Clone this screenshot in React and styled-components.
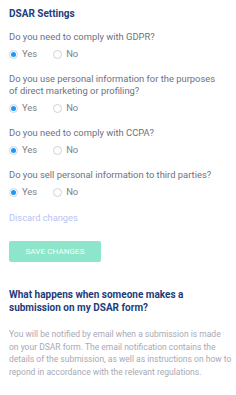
import React from "react";
import styled, { createGlobalStyle } from "styled-components";

const Global = createGlobalStyle`
  html, body { margin: 0; padding: 0; background: #ffffff; }
  body { font-family: Roboto, "Noto Sans", Arial, sans-serif; -webkit-font-smoothing: antialiased; }
  * { box-sizing: border-box; }
`;

const Page = styled.div`
  width: 236px;
  padding: 7px 4px 20px 9px;
  display: flex;
  flex-direction: column;
`;

const Title = styled.h2`
  margin: 0;
  font-size: 10px;
  line-height: 14px;
  font-weight: 700;
  color: #1d3d7c;
`;

const Questions = styled.div`
  display: flex;
  flex-direction: column;
  gap: 13px;
  margin-top: 10px;
`;

const Question = styled.div`
  display: flex;
  flex-direction: column;
  gap: 5px;
`;

const QText = styled.div`
  font-size: 9.4px;
  line-height: 12px;
  color: #6e7181;
  padding-right: 12px;
`;

const RadioRow = styled.div`
  display: flex;
  align-items: center;
  gap: 16px;
  height: 12px;
`;

const Option = styled.label`
  display: flex;
  align-items: center;
  gap: 4px;
  font-size: 9.4px;
  line-height: 12px;
  color: #7b7e8c;
`;

const Circle = styled.span`
  width: 9px;
  height: 9px;
  border-radius: 50%;
  border: 1px solid ${(p) => (p.$on ? "#c9d6e6" : "#cfd2d8")};
  background: #fff;
  display: flex;
  align-items: center;
  justify-content: center;
  &::after {
    content: "";
    width: 5px;
    height: 5px;
    border-radius: 50%;
    background: ${(p) => (p.$on ? "#2196f3" : "transparent")};
  }
`;

const Discard = styled.div`
  margin-top: 14px;
  font-size: 9.3px;
  line-height: 12px;
  color: #b7c3f3;
`;

const SaveButton = styled.button`
  margin-top: 17px;
  width: 92px;
  height: 21px;
  border: none;
  border-radius: 2px;
  background: #8de6cb;
  color: #f4fffb;
  font-family: inherit;
  font-size: 8px;
  letter-spacing: 0.1px;
  text-transform: uppercase;
  padding: 0;
`;

const Heading = styled.h3`
  margin: 26px 0 0 0;
  font-size: 10px;
  line-height: 13px;
  font-weight: 700;
  color: #1d3d7c;
  padding-right: 36px;
`;

const Para = styled.p`
  margin: 14px 0 0 0;
  font-size: 8.5px;
  line-height: 12.7px;
  color: #a7aab6;
`;

const questions = [
  "Do you need to comply with GDPR?",
  "Do you use personal information for the purposes of direct marketing or profiling?",
  "Do you need to comply with CCPA?",
  "Do you sell personal information to third parties?",
];

export default function App() {
  return (
    <>
      <Global />
      <Page>
        <Title>DSAR Settings</Title>
        <Questions>
          {questions.map((q) => (
            <Question key={q}>
              <QText>{q}</QText>
              <RadioRow>
                <Option>
                  <Circle $on />
                  Yes
                </Option>
                <Option>
                  <Circle />
                  No
                </Option>
              </RadioRow>
            </Question>
          ))}
        </Questions>
        <Discard>Discard changes</Discard>
        <SaveButton>Save changes</SaveButton>
        <Heading>What happens when someone makes a submission on my DSAR form?</Heading>
        <Para>
          You will be notified by email when a submission is made on your DSAR
          form. The email notification contains the details of the submission,
          as well as instructions on how to repond in accordance with the
          relevant regulations.
        </Para>
      </Page>
    </>
  );
}
